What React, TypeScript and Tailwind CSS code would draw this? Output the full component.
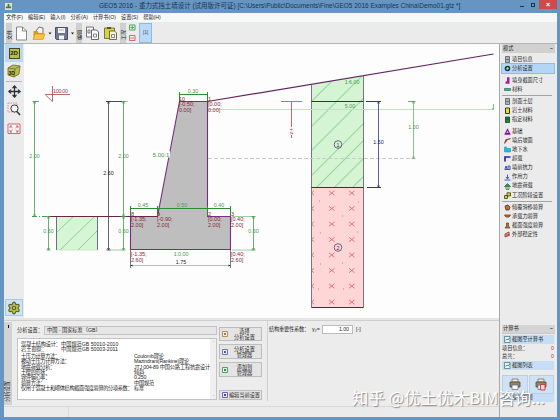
import type { ReactNode } from "react";
import { Move, Settings } from "lucide-react";

const menu = ["文件(F)", "编辑(E)", "输入(I)", "分析(A)", "计算书(O)", "设置(S)", "帮助(H)"];

const modes = [
    { label: "项目信息", icon: "doc" },
    { label: "分析设置", icon: "gear", active: true },
    { label: "墙身截面尺寸", icon: "wall", gap: true },
    { label: "材料", icon: "bar" },
    { label: "剖面土层", icon: "doc", line: true },
    { label: "岩土材料", icon: "yellow" },
    { label: "指定材料", icon: "green" },
    { label: "基础", icon: "base", gap: true },
    { label: "墙后坡面", icon: "slope" },
    { label: "地下水", icon: "water" },
    { label: "超载", icon: "load" },
    { label: "墙前抗力", icon: "resist" },
    { label: "作用力", icon: "force" },
    { label: "地震荷载", icon: "quake" },
    { label: "工况阶段设置", icon: "stage" },
    { label: "倾覆滑移验算", icon: "check", line: true },
    { label: "承载力验算", icon: "bearing" },
    { label: "截面强度验算", icon: "strength" },
    { label: "外部稳定性", icon: "stability" },
];

const report = [
    ["土压力计算方法：", "Coulomb理论"],
    ["被动土压力计算方法：", "Mazindrani(Rankine)理论"],
    ["地震荷载分析：", "JTJ 004-89 中国公路工程抗震设计"],
    ["土楔的形状：", "倾斜"],
    ["容许偏心率：", "0.250"],
    ["验算方法：", "中国规范"],
    ["仅用于混凝土和砌体结构截面强度验算的分项系数：", "标准"],
];

const crossRows = [193, 208.5, 224, 239.5, 255, 270.5, 286, 302];

function ModeIcon({ name }: { name: string }) {
    const shapes: Record<string, ReactNode> = {
        doc: <path d="M1.5 .5h4v6h-4zM2 2h3M2 3.5h3M2 5h3" fill="#e8ecf2" stroke="#4b5360" strokeWidth=".8" />,
        gear: <circle cx="3.5" cy="3.5" r="2" fill="#bfe3c4" stroke="#15382b" strokeWidth="1.6" />,
        wall: <path d="M3 .3h2.500v6.400H1.500V5L3 4z" fill="#b512b0" />,
        bar: <path d="M.5 2.500h6v2h-6z" fill="#43b5a0" stroke="#28675f" strokeWidth=".7" />,
        yellow: <path d="M1.500 1h4v5.500h-4z" fill="#e5e02d" stroke="#33341c" />,
        green: <path d="M1.500 1h4v5.500h-4zM2 3h3" fill="#1e8a3c" stroke="#123c22" strokeWidth=".8" />,
        base: <path d="M3.500 1.500 5.500 5.500h-4zM.5 6.300h6" fill="#e6b3ea" stroke="#84159a" strokeWidth="1.100" />,
        slope: <path d="M.5 6.500 2 3 6.500 1.500M1 5l2-2" fill="none" stroke="#7b4030" strokeWidth="1.200" />,
        water: <path d="M.5 1h2v1.500h4V6h-6z" fill="#19bfe5" stroke="#1592b5" strokeWidth=".6" />,
        load: <path d="M1 6.500V2h5.500" fill="none" stroke="#2227c4" strokeWidth="1.700" />,
        resist: <path d="M.5 5.500h6M1 5l1-3 1 3M4 5V2h2v3" fill="none" stroke="#3440ad" strokeWidth=".9" />,
        force: <path d="M3.500.5v4M2 3l1.500 2L5 3M.5 6h6" fill="none" stroke="#3347d0" strokeWidth=".9" />,
        quake: <path d="M3.500.5 6.500 3.500h-6zM1 5h5M2 6.500h3" fill="#2b9b45" stroke="#1d5f30" strokeWidth=".7" />,
        stage: <path d="M.5 3.500h3v3h-3zM3 .8h3.500V4H3z" fill="#d5d62a" stroke="#3b3c16" strokeWidth=".8" />,
        check: <path d="M1 2l3-1 2 2-1 3H2z" fill="#c96b3c" stroke="#5c2a1d" strokeWidth=".8" />,
        bearing: <path d="M.5 2h6L5 4H2z" fill="#d87730" stroke="#6b301a" strokeWidth=".8" />,
        strength: <path d="M2.500 1h2v3L6 6H1l1.500-2z" fill="#b3793a" stroke="#59391b" strokeWidth=".7" />,
        stability: <path d="M1 6V3l4-2v3.500zM2 4h4" fill="#eab098" stroke="#9c3928" strokeWidth=".9" />,
    };
    return <svg viewBox="0 0 7 7" className="h-[7px] w-[7px] shrink-0">{shapes[name]}</svg>;
}

function Handle({ label }: { label: string }) {
    return (
        <div className="flex h-[20px] w-[6px] shrink-0 items-end justify-center bg-[#cfcfcf] pb-[2px]">
            <span className="rotate-180 whitespace-nowrap text-[5px] leading-none text-[#222] [text-orientation:sideways] [writing-mode:vertical-rl]">{label}</span>
        </div>
    );
}

function VDim({ x, y1, y2, color }: { x: number; y1: number; y2: number; color: string }) {
    return <path d={`M${x} ${y1}V${y2}M${x - 2} ${y1}h4M${x - 2} ${y2}h4M${x - 1} ${y1 + 2}l1-2 1 2M${x - 1} ${y2 - 2}l1 2 1-2`} stroke={color} strokeWidth=".8" fill="none" />;
}

function Coord({ x, y, n, a, b }: { x: number; y: number; n?: string; a: string; b: string }) {
    return (
        <g fill="#8c2633" fontSize="5.5">
            {n && <text x={x} y={y - 5.5}>{n}</text>}
            <text x={x} y={y}>{a}</text>
            <text x={x} y={y + 6}>{b}</text>
        </g>
    );
}

function Drawing() {
    const green = "#469a4c";
    return (
        <svg viewBox="24 44 474 274" className="h-[274px] w-[474px]" fontFamily="Liberation Sans, sans-serif" fontSize="5.3">
            <defs>
                <clipPath id="soil"><path d="M311.500 84.500 363.500 76V187.500h-52z" /></clipPath>
                <clipPath id="front"><path d="M56.500 216.500h41v33.500h-41z" /></clipPath>
                <clipPath id="rock"><path d="M312 188h51v119h-51z" /></clipPath>
            </defs>

            {/* soil in front of the wall */}
            <path d="M56.500 216.500h41V250h-41z" fill="#d5f5d5" />
            <g clipPath="url(#front)" stroke="#86c889" strokeWidth=".9">
                <path d="M56 233 77 213M60 250 98 213M78 250 100 228" />
            </g>
            <path d="M56.500 216V250M97.500 216V250" stroke="#4c4c5c" strokeWidth=".8" />
            <path d="M57 250h41" stroke="#b9dcb9" strokeWidth=".6" />

            {/* soil profile */}
            <path d="M311.500 84.500 363.500 76V187.500h-52z" fill="#d4f4d4" />
            <g clipPath="url(#soil)" stroke="#9ad69c" strokeWidth="1.100">
                <path d="M306 107 344 69M306 132 366 72M306 156 370 92M306 181 370 117M314 190 370 134M332 190 370 152M350 190 370 170" />
            </g>
            <path d="M311.500 187.500h52V307.500h-52z" fill="#ffd6d6" />
            <g clipPath="url(#rock)" stroke="#df6b72" strokeWidth=".9">
                {crossRows.map((y) => (
                    <path key={y} d={`M309 ${y - 2.2}l5 4.400m0-4.400l-5 4.400M329 ${y - 2.2}l5.500 4.400m0-4.400l-5.500 4.400M349 ${y - 2.2}l5.500 4.400m0-4.400l-5.500 4.400`} />
                ))}
                <path d="M319 201h1M342 216h1M357 232h1M320 233h1M342 263h1M318 289h1M343 289h1M358 202h1M320 264h1" />
            </g>
            <path d="M311.500 84V307.500M363.500 76V307.500" stroke="#60516b" strokeWidth=".8" />
            <path d="M311.500 101.500h52M311.500 187.500h52M311.500 307.500h52" stroke="#4a2358" />
            <g fill="none" stroke="#51406c" strokeWidth=".8">
                <circle cx="338" cy="144.500" r="3.800" />
                <circle cx="338" cy="247.500" r="3.800" />
            </g>
            <g fill="#41305c" textAnchor="middle">
                <text x="338" y="146.500">1</text>
                <text x="338" y="249.500">2</text>
            </g>

            {/* helper lines */}
            <path d="M208 109.500H493.500" stroke="#c3e2c5" />
            <path d="M493.500 104v6M492 108l1.500 2" stroke="#7dbd82" fill="none" />
            <path d="M208 158.500H413" stroke="#c6c6c6" strokeWidth=".9" strokeDasharray="4 2" />

            {/* wall */}
            <path d="M179.500 101.500h28v115h23v33h-100v-33h27z" fill="#bebebe" stroke="#782c82" strokeWidth="1.100" />
            <path d="M207.500 101.500 493.500 54" stroke="#61245f" strokeWidth="1.200" />
            <path d="M48 216.500h109" stroke="#6a2346" strokeWidth="1.100" />
            <path d="M32 216.500h16" stroke={green} strokeDasharray="5 2 1 2" />

            {/* water level mark */}
            <path d="M45 94.500h25M45.500 95l7 6.500V86" stroke="#a8434b" strokeWidth=".8" fill="none" />
            <text x="53" y="92.800" fill="#a03941" textLength="15">100.00</text>

            {/* vertical dimensions */}
            <VDim x={34.5} y1={101.5} y2={216.5} color={green} />
            <path d="M34 101.500h5" stroke={green} strokeWidth=".8" />
            <VDim x={48.5} y1={216.5} y2={250} color={green} />
            <VDim x={123.5} y1={101.5} y2={216.5} color={green} />
            <VDim x={123.5} y1={216.5} y2={250} color={green} />
            <VDim x={253.5} y1={216.5} y2={250} color={green} />
            <VDim x={108.5} y1={101.5} y2={250} color="#3a3a42" />
            <path d="M106 101.500h16" stroke="#3a3a42" strokeWidth=".9" />
            <path d="M123 101.500h5M110 250h12M232 216.500h21M232 250h21" stroke={green} strokeWidth=".5" />
            <VDim x={378.5} y1={101.5} y2={187.5} color="#34347e" />
            <path d="M366 101.500h15M367 187.500h14" stroke="#34347e" />
            <VDim x={413.5} y1={101.5} y2={158.5} color="#6dad70" />
            <path d="M408 101.500h7" stroke={green} strokeWidth=".8" />
            <path d="M281 101.500h21M291.500 101.500V127M291.500 135v3" stroke="#d45353" strokeWidth=".9" />
            <text transform="translate(289.500 128) rotate(90)" fill="#cc2f2f" fontSize="6">+z</text>

            {/* horizontal dimensions */}
            <g stroke="#2e8b38" strokeWidth="1" fill="none">
                <path d="M179.500 94.500h28M179.500 92v9M207.500 92v9" />
                <path d="M130.500 208.500h100M130.500 206v10M157.500 206v10M207.500 206v10M230.500 206v10" />
            </g>
            <path d="M130.500 265.500h100" stroke="#9b9b9b" strokeWidth=".7" />
            <path d="M130.500 250v18M230.500 250v18" stroke="#55555a" strokeWidth=".8" />
            <path d="M130.500 265.500l2-1v2zM230.500 265.500l-2-1v2z" fill="#222" />

            {/* values */}
            <g fill={green} textAnchor="middle">
                <text x="34.500" y="157.500">2.00</text>
                <text x="123.500" y="157.500">2.00</text>
                <text x="48.500" y="232.500">0.60</text>
                <text x="123.500" y="232.500">0.60</text>
                <text x="253.500" y="232.500">0.60</text>
                <text x="193" y="93">0.30</text>
                <text x="143" y="207">0.45</text>
                <text x="182" y="207">0.50</text>
                <text x="219" y="207">0.40</text>
                <text x="181" y="256">1:0.00</text>
                <path d="M152 151h18v6.500h-18z" fill="#fff" />
                <text x="161" y="156.500" fontSize="6">5.00:1</text>
                <text x="413.500" y="129">1.00</text>
                <text x="352" y="84">1:6.00</text>
                <text x="350" y="108">5.00</text>
            </g>
            <g textAnchor="middle">
                <text x="108.500" y="175" fill="#222">2.60</text>
                <text x="181" y="263.500" fill="#222">1.75</text>
                <text x="378.500" y="143.500" fill="#1d1d80">1.50</text>
            </g>

            {/* node coordinates */}
            <Coord x={179} y={106} n="10" a="[-0.50;" b="0.00]" />
            <Coord x={208} y={106} n="1" a="[0.00;" b="0.00]" />
            <Coord x={131} y={221} n="8" a="[-1.35;" b="2.00]" />
            <Coord x={157} y={221} n="9" a="[-0.90;" b="2.00]" />
            <Coord x={208} y={221} n="2" a="[0.00;" b="2.00]" />
            <Coord x={231} y={221} n="3" a="[0.40;" b="2.00]" />
            <Coord x={131} y={255.5} a="[-1.35;" b="2.60]" />
            <Coord x={231} y={255.5} a="[0.40;" b="2.60]" />
        </svg>
    );
}

function TopBar() {
    return (
        <div className="flex h-[22px] shrink-0 items-center border-b border-[#b5b5b5] bg-[#ebebeb] pl-[2px]">
            <Handle label="文件" />
            <svg viewBox="12 21 64 22" className="h-[22px] w-[64px] shrink-0">
                <path d="M16.500 26h6l4 4v9h-10z" fill="#fff" stroke="#6c6c6c" strokeWidth=".8" />
                <path d="M22.500 26v4h4" fill="none" stroke="#6c6c6c" strokeWidth=".8" />
                <path d="M36 30l3-4 4 1v5" fill="#f4f4f4" stroke="#555" strokeWidth=".8" />
                <path d="M33.500 30h4l1 2h5v6h-10z" fill="#d99a1b" />
                <path d="M33 38.500l2-5.500h10l-2 5.500z" fill="#f7c548" stroke="#d18e17" strokeWidth=".6" />
                <path d="M48.500 31.500h3l-1.500 2zM71 31.500h3l-1.500 2z" fill="#222" />
                <path d="M55.500 26.500h12v12h-11l-1-1z" fill="#70788d" stroke="#3d4559" strokeWidth=".9" />
                <path d="M58 27h7v5h-7zM59 34.500h5v4h-5z" fill="#f3f5f8" />
                <path d="M59 29h5" stroke="#888" strokeWidth=".6" />
            </svg>
            <Handle label="编辑" />
            <svg viewBox="82 21 38 22" className="h-[22px] w-[38px] shrink-0">
                <path d="M86.500 26h7v10h-7z" fill="#f6f6f6" stroke="#565656" strokeWidth=".8" />
                <path d="M91.500 29h5l2 2v7.500h-7z" fill="#fff" stroke="#454545" strokeWidth=".8" />
                <path d="M88 29h2v3h-2zM93.500 33h3v3h-3z" fill="none" stroke="#555" strokeWidth=".7" />
                <path d="M104.500 27h10v10.500h-10z" fill="#d7d340" stroke="#5c5b27" strokeWidth=".8" />
                <path d="M107 26h4v2h-4z" fill="#56562f" />
                <path d="M109.500 30h5l2 2v6.500h-7z" fill="#f4f4db" stroke="#4e4e36" strokeWidth=".8" />
                <path d="M111.500 33.500h3v3h-3z" fill="none" stroke="#555" strokeWidth=".7" />
            </svg>
            <Handle label="工况" />
            <svg viewBox="0 0 8 22" className="ml-[2px] h-[22px] w-[8px] shrink-0">
                <path d="M1.500 3h5.500v5H1.500z" fill="#effaf0" stroke="#3ba04e" strokeWidth=".9" />
                <path d="M4.250 3.500v4M2.300 5.500h4" stroke="#3ba04e" strokeWidth=".9" />
                <path d="M1.500 13.500h5.500v5H1.500z" fill="#fff1f1" stroke="#d0575c" strokeWidth=".9" />
                <path d="M2.300 16h4" stroke="#d0575c" strokeWidth=".9" />
            </svg>
            <div className="ml-[3px] flex h-[20px] w-[13px] items-center justify-center border border-[#8fb9e3] bg-[#bbd9f5]">
                <span className="text-[5px] leading-none tracking-tight text-[#41607f]">[1]</span>
            </div>
        </div>
    );
}

function SideTools() {
    return (
        <div className="flex w-[20px] shrink-0 flex-col items-center bg-[#ebebeb]">
            <div className="flex h-[18px] w-[18px] items-center justify-center bg-[#bcd7f2]">
                <div className="flex h-[11px] w-[11px] items-center justify-center border border-[#454821] bg-[#b8bd46] text-[6px] font-bold leading-none text-[#202512]">2D</div>
            </div>
            <svg viewBox="0 0 14 14" className="mt-[2px] h-[14px] w-[14px]">
                <path d="M1 4 6 1l7 1-1 8-5 3-6-2z" fill="#b9bd4b" stroke="#626532" strokeWidth=".8" />
                <path d="M1 4l7 1 5-3M8 5l-1 8" fill="none" stroke="#626532" strokeWidth=".7" />
                <text x="1.500" y="10.500" fontSize="5" fontWeight="bold" fill="#26290f">3D</text>
            </svg>
            <div className="mt-[3px] h-px w-[16px] bg-[#b9b9b9]" />
            <Move className="mt-[3px] h-[13px] w-[13px] text-[#27313b]" strokeWidth={2.4} />
            <svg viewBox="0 0 14 14" className="mt-[4px] h-[14px] w-[14px]">
                <path d="M1 1h9v9H1z" fill="none" stroke="#d8747b" strokeWidth=".8" strokeDasharray="1.500 1" />
                <circle cx="7.500" cy="6.500" r="3.600" fill="#f5f7f9" stroke="#343a42" />
                <path d="M10 9.500l3 3.500" stroke="#343a42" strokeWidth="1.600" />
            </svg>
            <svg viewBox="0 0 14 12" className="mt-[7px] h-[12px] w-[14px]">
                <path d="M1 1h12v9.500H1z" fill="#fdf6f6" stroke="#c95962" strokeWidth=".9" />
                <path d="M3 5V3h2M9 3h2v2M11 7v2H9M5 9H3V7M3 3l2.500 2M11 3 8.500 5M11 9 8.500 7M3 9l2.500-2" fill="none" stroke="#c95962" strokeWidth=".8" />
            </svg>
            <div className="mb-[2px] mt-auto flex h-[17px] w-[18px] items-center justify-center border border-[#a8c8e8] bg-[#d0e3f5]">
                <Settings className="h-[14px] w-[14px] fill-[#bdc448] text-[#5c6136]" strokeWidth={2} />
            </div>
        </div>
    );
}

function ReportIcon() {
    return (
        <svg viewBox="0 0 7 7" className="h-[7px] w-[7px] shrink-0">
            <path d="M.5.5h5.500v6H.5z" fill="#e8f4f2" stroke="#537a83" strokeWidth=".8" />
            <path d="M1.500 4.500 3 3l1 1 2-2.500" fill="none" stroke="#25816c" strokeWidth=".8" />
        </svg>
    );
}

function Printer({ red }: { red?: boolean }) {
    return (
        <div className="flex h-[19px] flex-1 items-center justify-center border border-[#b5d0ea] bg-[#cfe2f4]">
            <svg viewBox="0 0 12 13" className="h-[13px] w-[12px]">
                <path d="M3 1h6v3H3z" fill="#f3ead2" stroke="#6a5c4c" strokeWidth=".7" />
                <path d="M1 4h10v5H1z" fill="#8e8271" stroke="#50483f" strokeWidth=".8" />
                <path d="M3 7h6v4.500H3z" fill="#f5f5f5" stroke="#666" strokeWidth=".7" />
                {red && <path d="M5.500 6.500H10V12H5.500z" fill="#f5d5d6" stroke="#ce3f47" />}
            </svg>
        </div>
    );
}

function ModePanel() {
    return (
        <div className="flex w-[58px] shrink-0 flex-col border-l border-[#a8a8a8] bg-[#ebebeb] pl-[2px] pr-[2px]">
            <div className="flex h-[9px] shrink-0 items-center justify-between bg-[#d0d0d0] px-px leading-none">
                <span>模式</span>
                <span className="pr-px font-bold">–</span>
            </div>
            <div className="pt-[2px]">
                {modes.map((m) => (
                    <div key={m.label}>
                        {m.gap && <div className="h-[3px]" />}
                        {m.line && <div className="my-px h-px w-[50px] bg-[#a4a4a4]" />}
                        <div
                            className={
                                m.active
                                    ? "flex h-[9px] w-[52px] items-center gap-px bg-[#b4d6f5] pl-[2px] leading-none outline outline-[0.5px] outline-[#8dbce9]"
                                    : "flex h-[9.05px] w-[52px] items-center gap-px pl-[2px] leading-none"
                            }
                        >
                            <ModeIcon name={m.icon} />
                            <span className="whitespace-nowrap">{m.label}</span>
                        </div>
                    </div>
                ))}
            </div>
            <div className="mt-auto flex h-[9px] items-center justify-between border-b border-[#c8c8c8] bg-[#d4d4d4] px-px leading-none">
                <span>计算书</span>
                <span className="pr-px font-bold">–</span>
            </div>
            <div className="mt-px flex h-[9px] w-[52px] items-center gap-px bg-[#c5def5] pl-[2px] leading-none">
                <ReportIcon />
                <span className="whitespace-nowrap">截图至计算书</span>
            </div>
            <div className="flex h-[9px] items-center justify-between pr-px leading-none">
                <span>项目信息：</span>
                <span className="text-[#b03838]">0</span>
            </div>
            <div className="flex h-[8px] items-center justify-between pr-px leading-none">
                <span>总共：</span>
                <span className="text-[#b03838]">0</span>
            </div>
            <div className="flex h-[9px] w-[52px] items-center gap-px bg-[#c5def5] pl-[2px] leading-none">
                <ReportIcon />
                <span className="whitespace-nowrap">截图列表</span>
            </div>
            <div className="mt-[5px] flex w-[52px] gap-px">
                <Printer />
                <Printer red />
            </div>
            <div className="mb-[15px] flex h-[8px] w-[52px] items-center gap-px bg-[#c5def5] pl-[2px] leading-none">
                <ReportIcon />
                <span className="whitespace-nowrap">复制视图</span>
            </div>
        </div>
    );
}

function SideButton({ lines, color, className }: { lines: string[]; color: string; className: string }) {
    return (
        <div className={`flex w-[43px] items-center border border-[#bdbdbd] bg-[#e4e4e4] pl-[2px] leading-[6px] ${className}`}>
            <svg viewBox="0 0 6 6" className="h-[6px] w-[6px] shrink-0">
                <path d="M.5.500h5v5h-5z" fill="#edf0f1" stroke={color} strokeWidth=".8" />
                <path d="M2 2h2v2H2z" fill={color} />
            </svg>
            <div className="flex-1 text-center">
                {lines.map((l) => (
                    <div key={l} className="whitespace-nowrap">{l}</div>
                ))}
            </div>
        </div>
    );
}

function AnalysisPanel() {
    return (
        <div className="flex h-[86px] shrink-0 border-t border-[#cfcfcf] bg-[#ececec]">
            <div className="mt-px flex h-[83px] w-[8px] shrink-0 flex-col items-center justify-between bg-[#d2d2d2] py-[3px]">
                <div className="h-[3px] w-px bg-[#111]" />
                <span className="rotate-180 whitespace-nowrap leading-none [text-orientation:sideways] [writing-mode:vertical-rl]">分析设置</span>
            </div>
            <div className="flex w-[205px] shrink-0 flex-col pl-[5px] pt-[5px]">
                <div className="flex h-[9px] items-center">
                    <span className="w-[27px] whitespace-nowrap leading-none">分析设置：</span>
                    <div className="flex h-[9px] flex-1 items-center border border-[#c3c3c3] bg-[#e6e6e6] pl-[2px] leading-none">中国 - 国家标准（GB）</div>
                </div>
                <div className="mt-[3px] flex h-[62px] border border-[#c3c3c3] bg-white">
                    <div className="flex-1 pl-[3px] pt-[3px] leading-[5.4px]">
                        <div className="flex whitespace-nowrap">
                            <span className="w-[40px] tracking-[-0.25px]">混凝土结构设计：</span>
                            <span>中国规范GB 50010-2010</span>
                        </div>
                        <div className="flex whitespace-nowrap">
                            <span className="w-[40px]">岩土勘察：</span>
                            <span>中国规范GB 50003-2011</span>
                        </div>
                        <div className="h-px" />
                        {report.map(([k, v]) => (
                            <div key={k} className="flex whitespace-nowrap">
                                <span className="w-[113px] shrink-0 tracking-[-0.35px]">{k}</span>
                                <span className="tracking-[-0.15px]">{v}</span>
                            </div>
                        ))}
                    </div>
                    <div className="flex w-[6px] flex-col items-center justify-between bg-[#f0f0f0] py-[2px] text-[4px] leading-none text-[#b5b5b5]">
                        <span>⌃</span>
                        <span>⌄</span>
                    </div>
                </div>
            </div>
            <div className="ml-[2px] flex flex-col pt-[6px]">
                <SideButton lines={["选择", "分析设置"]} color="#ad7a24" className="h-[14px]" />
                <SideButton lines={["分析设置", "管理器"]} color="#5455b5" className="mt-[3px] h-[15px]" />
                <SideButton lines={["添加到", "管理器"]} color="#2c8d45" className="mt-[3px] h-[15px]" />
                <SideButton lines={["编辑当前设置"]} color="#3f42c1" className="mt-[13px] h-[10px]" />
            </div>
            <div className="ml-[5px] h-[80px] w-px bg-[#d0d0d0]" />
            <div className="mt-[4px] flex h-[9px] items-center pl-px leading-none">
                <span className="w-[43px] whitespace-nowrap tracking-[-0.2px]">结构重要性系数：</span>
                <span className="w-[10px] whitespace-nowrap">γ₀=</span>
                <div className="h-[9px] w-[31px] border border-[#bcbcbc] bg-white pr-[3px] text-right leading-[7px]">1.00</div>
                <span className="pl-[3px]">[-]</span>
            </div>
        </div>
    );
}

export default function App() {
    return (
        <div className="relative flex h-[420px] w-[560px] flex-col overflow-hidden bg-[#6695c2] pb-[3px] pl-[4px] pr-[3px] font-['Liberation_Sans','Noto_Sans_CJK_SC',sans-serif] text-[5.2px] text-[#252525]">
            <div className="flex h-[13px] shrink-0 items-center">
                <svg viewBox="0 0 8 8" className="ml-px h-[7px] w-[7px]">
                    <path d="M0 0h8v8H0z" fill="#d8e5cc" />
                    <path d="M1 6h6V4H5V1H3v3H1z" fill="#4d714c" />
                </svg>
                <div className="ml-[87px] w-[362px] whitespace-nowrap text-[6.48px] leading-none text-[#173550]">
                    GEO5 2016 - 重力式挡土墙设计 (试用版许可证) [C:\Users\Public\Documents\Fine\GEO5 2016 Examples China\Demo01.gtz *]
                </div>
                <div className="ml-auto flex h-[9px] items-center self-start">
                    <div className="mr-[7px] mt-[3px] h-px w-[4px] bg-[#1f3347]" />
                    <div className="mr-[4px] h-[4px] w-[4px] border border-[#1f3347]" />
                    <div className="flex h-[9px] w-[18px] items-center justify-center bg-[#cf4b4b] text-[7px] font-bold leading-none text-white">×</div>
                </div>
            </div>
            <div className="flex h-[9px] shrink-0 items-center gap-[5px] bg-[#f7f8f8] pl-[2px] leading-none">
                {menu.map((m) => (
                    <span key={m} className="whitespace-nowrap">{m}</span>
                ))}
            </div>
            <TopBar />
            <div className="flex min-h-0 flex-1 bg-[#ebebeb]">
                <div className="flex w-[495px] shrink-0 flex-col">
                    <div className="flex h-[274px] shrink-0">
                        <SideTools />
                        <div className="w-[475px] bg-[#fdfdfd]">
                            <Drawing />
                        </div>
                    </div>
                    <div className="h-[2px] shrink-0 bg-[#e6e6e6]" />
                    <AnalysisPanel />
                    <div className="flex flex-1 border-t border-[#d8d8d8]">
                        <div className="w-[65px] border-r border-[#dcdcdc]" />
                    </div>
                </div>
                <ModePanel />
            </div>
            <div className="absolute left-[352px] top-[387px] whitespace-nowrap font-['Noto_Sans_CJK_SC',sans-serif] text-[16.4px] leading-[20px] text-white [text-shadow:1px_1px_1px_#888]">
                知乎 @优土优木BIM咨询...
            </div>
        </div>
    );
}
